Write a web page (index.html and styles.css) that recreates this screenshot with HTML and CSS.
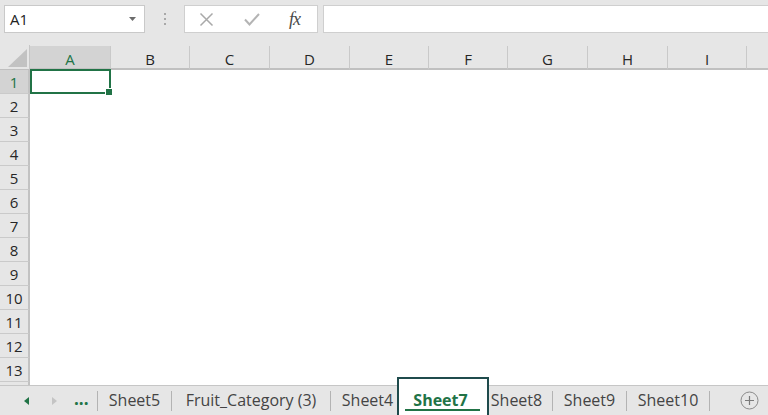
FILE: index.html
```html
<!DOCTYPE html>
<html>
<head>
<meta charset="utf-8">
<link rel="stylesheet" href="styles.css">
</head>
<body>
<div class="app">
  <div class="toolbar">
    <div class="namebox">
      <span class="ref">A1</span>
      <svg class="dd" width="7" height="4" viewBox="0 0 7 4"><path d="M0 0H7L3.5 4Z" fill="#6b6b6b"/></svg>
    </div>
    <div class="grip"><i></i><i></i><i></i></div>
    <div class="fxbox">
      <svg class="ico-x" width="15" height="15" viewBox="0 0 15 15"><path d="M1.5 1.5L13.5 13.5M13.5 1.5L1.5 13.5" stroke="#a9a9a9" stroke-width="1.5" fill="none"/></svg>
      <svg class="ico-check" width="16" height="13" viewBox="0 0 16 13"><path d="M1 6.5L5.5 11.5L15 1" stroke="#b4b4b4" stroke-width="2" fill="none"/></svg>
      <span class="fx">fx</span>
    </div>
    <div class="formula"></div>
  </div>

  <div class="sheet">
    <div class="corner"><svg width="19" height="18" viewBox="0 0 19 18"><path d="M19 0V18H0Z" fill="#c2c2c2"/></svg></div>
    <div class="colh sel">A</div>
    <div class="colh">B</div>
    <div class="colh">C</div>
    <div class="colh">D</div>
    <div class="colh">E</div>
    <div class="colh">F</div>
    <div class="colh">G</div>
    <div class="colh">H</div>
    <div class="colh">I</div>
    <div class="colh end"></div>

    <div class="cells"></div>
    <div class="active-cell"></div>

    <div class="rowh sel">1</div>
    <div class="rowh">2</div>
    <div class="rowh">3</div>
    <div class="rowh">4</div>
    <div class="rowh">5</div>
    <div class="rowh">6</div>
    <div class="rowh">7</div>
    <div class="rowh">8</div>
    <div class="rowh">9</div>
    <div class="rowh">10</div>
    <div class="rowh">11</div>
    <div class="rowh">12</div>
    <div class="rowh">13</div>
    <div class="rowh stub"></div>
  </div>

  <div class="tabs">
    <div class="nav">
      <svg class="prev" width="5" height="8" viewBox="0 0 5 8"><path d="M5 0V8L0 4Z" fill="#217346"/></svg>
      <svg class="next" width="5" height="8" viewBox="0 0 5 8"><path d="M0 0V8L5 4Z" fill="#c4c4c4"/></svg>
      <span class="more">...</span>
    </div>
    <div class="sep"></div>
    <div class="tab w73">Sheet5</div>
    <div class="sep"></div>
    <div class="tab w158">Fruit_Category (3)</div>
    <div class="sep"></div>
    <div class="tab w73">Sheet4</div>
    <div class="tab active"><span class="label">Sheet7</span></div>
    <div class="tab w71">Sheet8</div>
    <div class="sep"></div>
    <div class="tab w73">Sheet9</div>
    <div class="sep"></div>
    <div class="tab w82">Sheet10</div>
    <div class="sep"></div>
    <div class="add">
      <svg width="19" height="19" viewBox="0 0 19 19"><circle cx="9.5" cy="9.5" r="8.5" stroke="#8a8a8a" stroke-width="1" fill="none"/><path d="M9.5 5V14M5 9.5H14" stroke="#7a7a7a" stroke-width="1.2"/></svg>
    </div>
  </div>
</div>
</body>
</html>
```

FILE: styles.css
```css
* { box-sizing: border-box; }
html, body { margin: 0; padding: 0; }
body {
  width: 768px;
  height: 415px;
  overflow: hidden;
  background: #e6e6e6;
  font-family: "Open Sans", "Noto Sans", sans-serif;
  color: #262626;
}
.app { width: 768px; height: 415px; display: flex; flex-direction: column; }

/* toolbar */
.toolbar {
  height: 45px;
  display: flex;
  align-items: flex-start;
  padding: 5px 0 0 4px;
}
.namebox {
  width: 141px;
  height: 28px;
  background: #fff;
  border: 1px solid #c9c9c9;
  display: flex;
  align-items: center;
  padding-left: 5px;
  padding-right: 8px;
}
.ref { font-size: 15px; color: #222; flex: 1; line-height: 1; }
.dd { display: block; }
.grip {
  width: 39px;
  height: 28px;
  display: flex;
  flex-direction: column;
  align-items: center;
  justify-content: center;
  gap: 3px;
}
.grip i { display: block; width: 2px; height: 2px; background: #a8a8a8; }
.fxbox {
  width: 134px;
  height: 28px;
  background: #fff;
  border: 1px solid #cfcfcf;
  display: flex;
  align-items: center;
  padding-left: 14px;
}
.ico-x { display: block; }
.ico-check { display: block; margin-left: 30px; }
.fx {
  margin-left: 29px;
  font-family: "Liberation Serif", "DejaVu Serif", serif;
  font-style: italic;
  font-size: 18px;
  color: #4a4a4a;
  line-height: 1;
  letter-spacing: -1px;
}
.formula {
  flex: 1;
  height: 28px;
  margin-left: 5px;
  background: #fff;
  border: 1px solid #cfcfcf;
  border-right: none;
}

/* sheet grid */
.sheet {
  height: 340px;
  display: grid;
  grid-template-columns: 30px 81px 79px 80px 80px 79px 79px 80px 80px 79px 1fr;
  grid-template-rows: 25px repeat(13, 24px) 3px;
}
.corner {
  grid-column: 1;
  grid-row: 1;
  display: flex;
  align-items: flex-end;
  justify-content: flex-end;
  padding: 0 2px 2px 0;
  border-bottom: 1px solid #bfbfbf;
  border-right: 1px solid #c6c6c6;
}
.corner svg { display: block; }
.colh {
  grid-row: 1;
  display: flex;
  align-items: center;
  justify-content: center;
  font-size: 15px;
  color: #262626;
  border-right: 1px solid #c9c9c9;
  border-bottom: 2px solid #c0c0c0;
  padding-top: 3px;
  margin-top: 1px;
}
.colh.sel { background: #d3d3d3; color: #217346; }
.colh.end { border-right: none; }

.cells {
  grid-column: 2 / -1;
  grid-row: 2 / -1;
  background: #fff;
}
.active-cell {
  grid-column: 2;
  grid-row: 2;
  margin: -1px 0 0 0;
  border: 2px solid #217346;
  position: relative;
}
.active-cell::after {
  content: "";
  position: absolute;
  right: -4px;
  bottom: -4px;
  width: 6px;
  height: 6px;
  background: #217346;
  border: 1px solid #fff;
}

.rowh {
  grid-column: 1;
  display: flex;
  align-items: center;
  justify-content: center;
  font-size: 15px;
  color: #262626;
  border-right: 2px solid #c2c2c2;
  border-bottom: 1px solid #cacaca;
  padding-top: 1px;
}
.rowh.sel { background: #d3d3d3; color: #217346; }
.rowh.stub { border-bottom: none; }

/* tabs */
.tabs {
  height: 30px;
  border-top: 1px solid #c6c6c6;
  display: flex;
  align-items: stretch;
  font-size: 16px;
  color: #444;
}
.nav {
  width: 97px;
  display: flex;
  align-items: center;
}
.prev { display: block; margin-left: 24px; }
.next { display: block; margin-left: 23px; }
.more {
  margin-left: 17px;
  color: #217346;
  font-weight: 700;
  font-size: 17px;
  letter-spacing: 0;
  line-height: 1;
  padding-bottom: 4px;
}
.sep {
  width: 1px;
  height: 20px;
  align-self: center;
  background: #b3b3b3;
}
.tab {
  display: flex;
  align-items: center;
  justify-content: center;
  white-space: nowrap;
  padding-bottom: 2px;
}
.w71 { width: 71px; }
.w73 { width: 73px; }
.w82 { width: 82px; }
.w158 { width: 158px; }
.tab.active {
  width: 77px;
  position: relative;
  z-index: 0;
  border-left: 1px solid #c8c8c8;
  border-right: 1px solid #c8c8c8;
  color: #217346;
  font-weight: 700;
  padding-bottom: 2px;
}
.tab.active::before {
  content: "";
  position: absolute;
  z-index: -1;
  left: -8px;
  right: -9px;
  top: -9px;
  bottom: 0;
  background: #fff;
  border: 2px solid #1f4b4c;
  border-bottom: none;
}
.tab.active::after {
  content: "";
  position: absolute;
  left: 0;
  right: 0;
  bottom: 4px;
  height: 2px;
  background: #217346;
}
.tab.active .label { position: relative; left: -2px; }
.add {
  flex: 1;
  display: flex;
  align-items: center;
  justify-content: flex-end;
  padding-right: 9px;
}
.add svg { display: block; }
```
